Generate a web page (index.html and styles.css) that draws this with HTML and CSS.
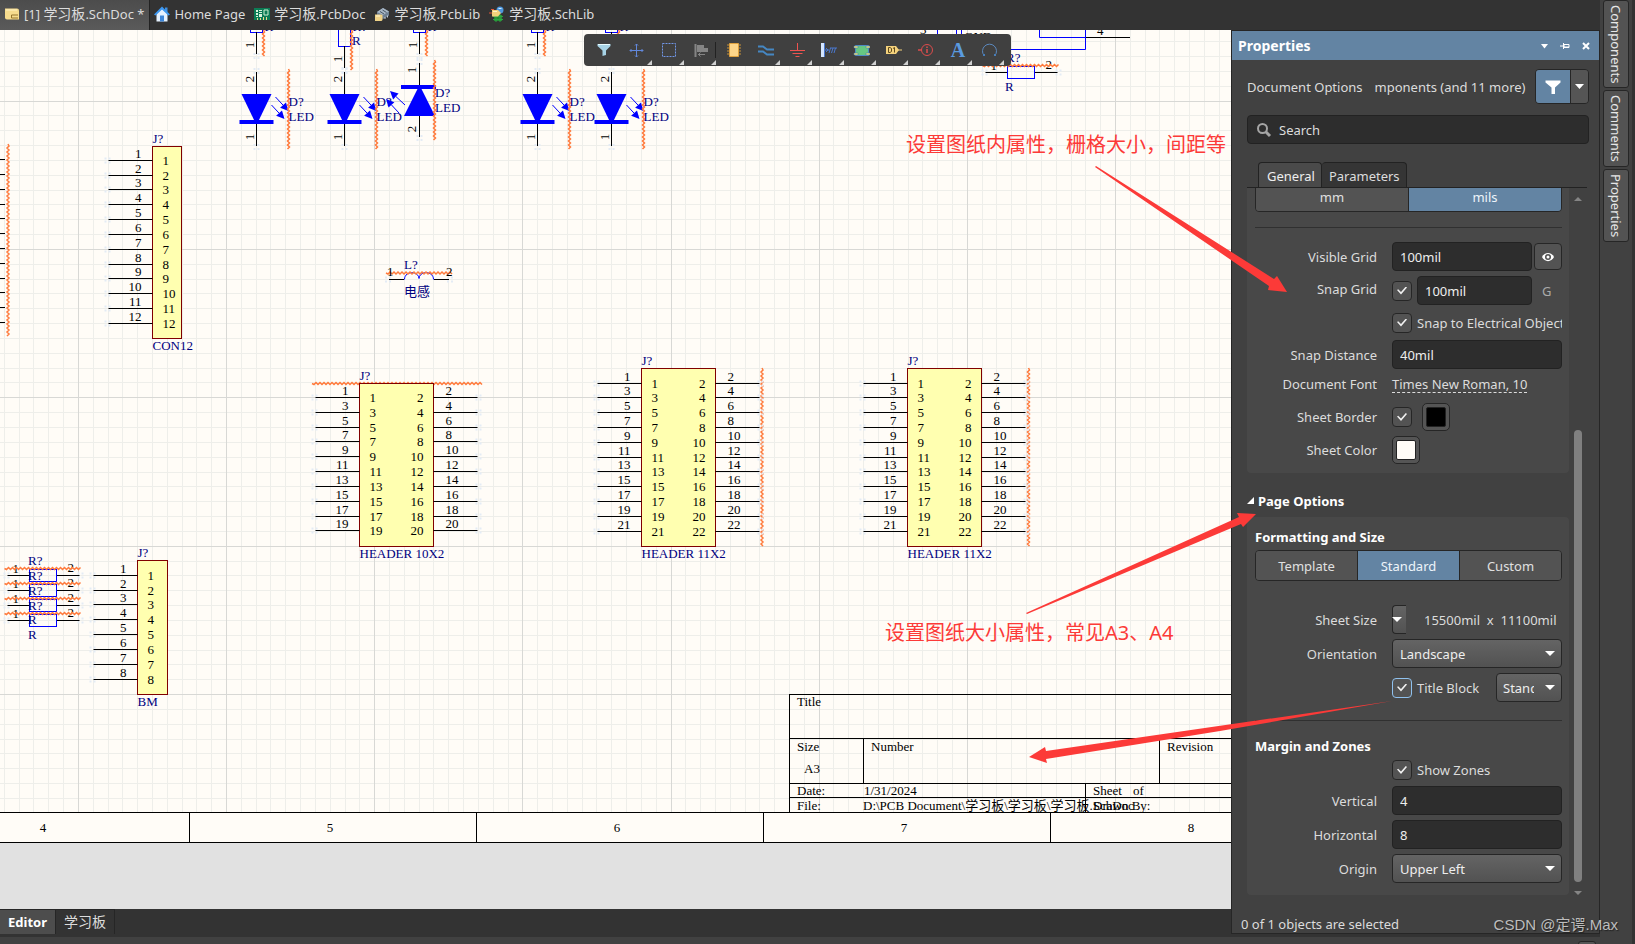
FILE: index.html
```html
<!DOCTYPE html>
<html lang="en">
<head>
<meta charset="utf-8">
<title>Schematic Editor</title>
<link rel="stylesheet" href="styles.css">
</head>
<body>
<div class="app">
  <div class="work">
    <nav class="doc-tabs" aria-label="Documents">
      <a class="doc-tab active" href="#">
        <svg width="16" height="16" viewBox="0 0 16 16"><path d="M1 2.500h12a2 2 0 0 1 2 2v9H3a2 2 0 0 1-2-2z" fill="#f7dc8e"/><path d="M2 3.500h11v1H2z" fill="#fff3c4"/><path d="M7.500 9H14M7.500 12H14M7.500 9v3" stroke="#94742c" fill="none"/></svg>
        <span>[1] <span class="cjk">学习板</span>.SchDoc *</span></a>
      <a class="doc-tab home" href="#">
        <svg width="16" height="16" viewBox="0 0 16 16"><path d="M11 1.500h2.500V6H11z" fill="#3e8ede"/><path d="M2.500 8 8 2.500 13.500 8v7.500h-11z" fill="#e4f1ff"/><path d="M0 8.500 8 .500l8 8-1.500 1L8 3.500 1.500 9.500z" fill="#3b97f2"/><path d="M6 9.500h4v6H6z" fill="#3d86d8"/></svg>
        <span>Home Page</span></a>
      <a class="doc-tab" href="#">
        <svg width="16" height="16" viewBox="0 0 16 16"><path d="M0 2h16v12H0z" fill="#0c7c55"/><path d="M2 4h2v2H2zM5 4h3v1H5zM5 6h3v1H5zM2 7h2v2H2zM2 10h2v1H2zM5 8h3v3H5z" fill="#d8f3de"/><path d="M10 4h4v5h-4z" fill="none" stroke="#c9efd0"/><path d="M3.500 12v2M6.500 12v2M9.500 11v3M12.500 11v3" stroke="#e7d98a"/></svg>
        <span><span class="cjk">学习板</span>.PcbDoc</span></a>
      <a class="doc-tab" href="#">
        <svg width="16" height="16" viewBox="0 0 16 16"><path d="M3 6 9 2l6 3.500v4L9 13 3 9z" fill="#6e7f92"/><path d="M3 6 9 2l6 3.500L9 9z" fill="#a8b7c6"/><path d="M6 5.500 10 8M8.500 4 12.500 6.500" stroke="#465463"/><path d="M1 8.500h6.500l1 1V14l-1 1H1z" fill="#efd287"/><path d="M2 10h4" stroke="#fff6d3"/><path d="M11 11v2M13.500 9.500v2" stroke="#c9d2da"/></svg>
        <span><span class="cjk">学习板</span>.PcbLib</span></a>
      <a class="doc-tab lib" href="#">
        <svg width="16" height="16" viewBox="0 0 16 16"><circle cx="11" cy="4" r="3.500" fill="#4d97dd"/><path d="M9.500 2.500h3" stroke="#cfe7ff"/><path d="M5 9h8v6H5z" fill="#248b35"/><path d="M4 10.500h10M4 13.500h10M7 8v8M11 8v8" stroke="#2fa443"/><path d="M3 4h6l3 3-3 3.500H3z" fill="#f2d27b"/><path d="M0 7h3M2 3.500h3" stroke="#e0573a"/><path d="M4 5.500h4" stroke="#fff2c6"/></svg>
        <span><span class="cjk">学习板</span>.SchLib</span></a>
    </nav>
    <div class="middle">
      <div class="editor">
        <div class="canvas">
          <svg id="sheet" class="sheet" role="img" aria-label="Schematic sheet"></svg>
          <div class="toolbar" role="toolbar" aria-label="Active bar">
            <button aria-label="Filter"><svg width="20" height="20" viewBox="0 0 20 20"><path d="M3.500 4h13v2L12 10.500V15l-3.500 1v-5.500L3.500 6z" fill="#a7d3e6"/><path d="M4 4.500h12" stroke="#e8fbff"/></svg></button>
            <button class="more" aria-label="Move"><svg width="20" height="20" viewBox="0 0 20 20"><path d="M10.500 4v13M4 10.500h13M9 5.500l1.500-1.500L12 5.500M9 15.500l1.500 1.500 1.500-1.500M5.500 9 4 10.500 5.500 12M15.500 9l1.500 1.500-1.500 1.500" fill="none" stroke="#6288dc"/></svg></button>
            <button class="more" aria-label="Select"><svg width="20" height="20" viewBox="0 0 20 20"><path d="M4.500 3.500h13v13h-13z" fill="none" stroke="#7197e8" stroke-dasharray="2 1"/></svg></button>
            <button class="more divider" aria-label="Align"><svg width="20" height="20" viewBox="0 0 20 20"><path d="M5.500 4v13" stroke="#858585" stroke-width="2"/><path d="M7 5h7v4H7zM7 8h11v4H7z" fill="#858585"/><path d="M8 14.500h7M10.500 12.500l-2 2 2 2" stroke="#858585" fill="none"/></svg></button>
            <button aria-label="Place part"><svg width="20" height="20" viewBox="0 0 20 20"><path d="M5 5h14M5 8h14M5 11h14M5 14h14" stroke="#c6923a"/><path d="M7.500 3.500h9v13h-9z" fill="#fdd589" stroke="#dfa13e"/></svg></button>
            <button class="more" aria-label="Place wire"><svg width="20" height="20" viewBox="0 0 20 20"><path d="M4 6.500h5l4 3h7M4 11.500h5l4 3h7" fill="none" stroke="#4587c3" stroke-width="2"/></svg></button>
            <button class="more" aria-label="Place ground"><svg width="20" height="20" viewBox="0 0 20 20"><path d="M11.500 3v8M4 10.500h15M6.500 13.500h10M9.500 16.500h4" fill="none" stroke="#ef5350"/></svg></button>
            <button class="more" aria-label="Place harness"><svg width="20" height="20" viewBox="0 0 20 20"><path d="M3 3h3v14H3z" fill="#d5e6ff"/><path d="M6.500 3v14M7 10h4M8 8l2 2-2 2M11 13l1.500-5M13.500 13 15 8M16 13l1.500-5M12 8h7" fill="none" stroke="#4a78cf"/></svg></button>
            <button class="more" aria-label="Place sheet symbol"><svg width="20" height="20" viewBox="0 0 20 20"><path d="M5.500 5.500h13v10h-13z" fill="#66c783" stroke="#4f8bc4"/><path d="M4 6h4v2H4zM16 6h4v2h-4zM4 13h4v2H4zM16 13h4v2h-4z" fill="#e9e07c" stroke="#4777ad" stroke-width=".5"/></svg></button>
            <button class="more" aria-label="Place port"><svg width="20" height="20" viewBox="0 0 20 20"><path d="M4 6h10l3 4-3 4H4z" fill="#f5d27c"/><path d="M16 10h4" stroke="#f5d27c"/><path d="M6.500 7.500v5M6.500 7.500h1.500l1.500 1v3l-1.500 1H6.500M11 8.500l1.500-1v5" fill="none" stroke="#5e4a1e"/></svg></button>
            <button class="more" aria-label="Place directive"><svg width="20" height="20" viewBox="0 0 20 20"><circle cx="13" cy="10" r="5.500" fill="none" stroke="#dd4c4c"/><path d="M4 10h4M13 9v4M13 6.500v1.500" stroke="#dd4c4c" stroke-width="1.500"/></svg></button>
            <button class="more letter" aria-label="Place text">A</button>
            <button class="more" aria-label="Place arc"><svg width="20" height="20" viewBox="0 0 20 20"><path d="M6 15.500a7 7 0 1 1 11 0" fill="none" stroke="#5b88bd"/><path d="M5 14h2v2H5zM16 14h2v2h-2z" fill="#477db8"/></svg></button>
          </div>
        </div>
        <nav class="sheet-tabs" aria-label="Sheets">
          <a class="sheet-tab active" href="#">Editor</a>
          <a class="sheet-tab cjk" href="#">学习板</a>
        </nav>
      </div>

      <aside class="panel">
        <header class="panel-head">
          <h1>Properties</h1>
          <button aria-label="Menu"><svg width="12" height="12" viewBox="0 0 12 12"><path d="M3 4h7L6.500 8.500z" fill="#fff"/></svg></button>
          <button aria-label="Pin"><svg width="12" height="12" viewBox="0 0 12 12"><path d="M1 6h4M4.500 3v6M5 4.500h5v3H5z" fill="none" stroke="#fff"/><path d="M5 7h5" stroke="#fff"/></svg></button>
          <button aria-label="Close"><svg width="12" height="12" viewBox="0 0 12 12"><path d="M3 3l6 6M9 3l-6 6" stroke="#fff" stroke-width="2"/></svg></button>
        </header>
        <div class="scope">
          <span>Document Options</span>
          <span class="scope-more">mponents (and 11 more)</span>
          <div class="split">
            <button class="split-main" aria-label="Filter objects"><svg width="16" height="16" viewBox="0 0 16 16"><path d="M.500 1.500h15v2L10 8.500V15H6.500V8.500L.500 3.500z" fill="#fff"/></svg></button>
            <button class="split-drop" aria-label="Filter options"><i class="caret"></i></button>
          </div>
        </div>
        <label class="search">
          <svg width="16" height="16" viewBox="0 0 16 16"><circle cx="6.500" cy="6.500" r="4.500" fill="none" stroke="#a5a5a5" stroke-width="2"/><path d="M10 10l4 4" stroke="#a5a5a5" stroke-width="3"/></svg>
          <input type="text" placeholder="Search" aria-label="Search">
        </label>
        <div class="prop-tabs" role="tablist">
          <button class="prop-tab active" role="tab" aria-selected="true">General</button>
          <button class="prop-tab" role="tab" aria-selected="false">Parameters</button>
        </div>
        <div class="scroll-area">
          <div class="scroll">
            <section class="card general">
              <div class="segments units"><button>mm</button><button class="on">mils</button></div>
              <hr class="rule">
              <div class="rows">
                <div class="row"><label for="vgrid">Visible Grid</label><div class="field tight"><input class="text" id="vgrid" type="text" value="100mil"><button class="eye" aria-label="Toggle grid"><svg width="14" height="12" viewBox="0 0 14 12"><path d="M1 6c2.500-5.500 9.500-5.500 12 0-2.500 5.500-9.500 5.500-12 0z" fill="#fff"/><circle cx="7" cy="6" r="3" fill="#505050"/><circle cx="7" cy="6" r="1.500" fill="#fff"/></svg></button></div></div>
                <div class="row"><label class="raised" for="sgrid">Snap Grid</label><div class="field"><input class="check" type="checkbox" checked aria-label="Snap Grid on"><input class="text" id="sgrid" type="text" value="100mil"><span class="hotkey">G</span></div></div>
                <div class="row short"><span></span><div class="field clip"><input class="check" id="elec" type="checkbox" checked><label for="elec">Snap to Electrical Object</label></div></div>
                <div class="row"><label for="sdist">Snap Distance</label><div class="field"><input class="text" id="sdist" type="text" value="40mil"></div></div>
                <div class="row font"><span>Document Font</span><div class="field"><a class="font-link" href="#">Times New Roman, 10</a></div></div>
                <div class="row color"><label for="border">Sheet Border</label><div class="field wide"><input class="check" id="border" type="checkbox" checked><input class="swatch" type="color" value="#000000" aria-label="Border color"></div></div>
                <div class="row color"><label for="scolor">Sheet Color</label><div class="field"><input class="swatch" id="scolor" type="color" value="#fffcf7"></div></div>
              </div>
            </section>
            <h2 class="group"><svg width="8" height="8" viewBox="0 0 8 8"><path d="M7 0v7H0z" fill="#fff"/></svg>Page Options</h2>
            <section class="card page">
              <h3>Formatting and Size</h3>
              <div class="segments"><button>Template</button><button class="on">Standard</button><button>Custom</button></div>
              <div class="rows size-rows">
                <div class="row"><label for="size">Sheet Size</label><div class="field"><span class="select mini"><select id="size"><option></option></select></span><span class="dims">15500mil&nbsp; x&nbsp; 11100mil</span></div></div>
                <div class="row"><label for="orient">Orientation</label><div class="field"><span class="select"><select id="orient"><option>Landscape</option></select></span></div></div>
                <div class="row"><span></span><div class="field"><input class="check focus" id="tblock" type="checkbox" checked><label for="tblock">Title Block</label><span class="select small"><select aria-label="Title block style"><option>Standard</option></select></span></div></div>
              </div>
              <hr class="rule lower">
              <h3>Margin and Zones</h3>
              <div class="rows">
                <div class="row zones"><span></span><div class="field"><input class="check" id="zones" type="checkbox" checked><label for="zones">Show Zones</label></div></div>
                <div class="row"><label for="vert">Vertical</label><div class="field"><input class="text" id="vert" type="text" value="4"></div></div>
                <div class="row"><label for="horz">Horizontal</label><div class="field"><input class="text" id="horz" type="text" value="8"></div></div>
                <div class="row"><label for="origin">Origin</label><div class="field"><span class="select"><select id="origin"><option>Upper Left</option></select></span></div></div>
              </div>
            </section>
          </div>
          <div class="bar" aria-hidden="true"><i class="up"></i><div class="track"><div class="thumb"></div></div><i class="down"></i></div>
        </div>
        <footer class="panel-foot">0 of 1 objects are selected</footer>
      </aside>
    </div>
    <div class="status"><button aria-label="Panels"></button></div>
  </div>
  <nav class="side" aria-label="Panels">
    <button>Components</button>
    <button>Comments</button>
    <button>Properties</button>
  </nav>
  <svg class="notes" aria-hidden="true">
    <g fill="#fc3a38">
      <path d="M1096 166 1095 167 1269 286 1268 290 1287 292 1277 276 1274 279z"/>
      <path d="M1026 613 1027 614 1241 524 1243 527 1256 514 1237 513 1239 517z"/>
      <path d="M1392 701 1046 751 1045 747 1029 757 1047 763 1046 759 1220 731z"/>
      <text x="906" y="152">设置图纸内属性，栅格大小，间距等</text>
      <text x="885" y="640">设置图纸大小属性，常见A3、A4</text>
    </g>
  </svg>
  <div class="watermark">CSDN @定谔.Max</div>
</div>
<script src="script.js"></script>
</body>
</html>
```
FILE: styles.css
```css
* { box-sizing: border-box; }

body {
  margin: 0;
  background: #333;
  color: #dcdcdc;
  font: 13px/18px "Noto Sans", "Noto Sans CJK SC", sans-serif;
}

button, input, select { font: inherit; color: inherit; margin: 0; }
button { padding: 0; border: 0; background: none; }
a { color: inherit; text-decoration: none; }
svg { display: block; flex: none; }
h1, h2, h3 { margin: 0; font-weight: 700; color: #fff; }
.cjk { font-size: 14px; }

.app { position: relative; display: flex; height: 100vh; overflow: hidden; }
.work { flex: 1; min-width: 0; display: flex; flex-direction: column; }
.middle { flex: 1; min-height: 0; display: flex; }

/* document tabs */
.doc-tabs { display: flex; height: 30px; background: #333; }
.doc-tab { display: flex; align-items: center; gap: 4px; height: 30px; padding: 0 0 2px 9px; white-space: nowrap; }
.doc-tab.active { padding: 0 5px 2px 4px; background: linear-gradient(#4c4c4c, #5a5a5a); border-right: 1px solid #222; }
.doc-tab.home { padding-left: 4px; }

/* canvas */
.editor { flex: 1; min-width: 0; display: flex; flex-direction: column; }
.canvas { position: relative; flex: 1; min-height: 0; overflow: hidden; background: #e1e1e1; }
.sheet { width: 100%; height: 100%; font: 13px "Liberation Serif", "Noto Sans CJK SC", serif; }

.toolbar {
  position: absolute;
  top: 4px;
  left: 584px;
  display: flex;
  padding: 0 7px 0 4px;
  background: #404040;
  border-radius: 4px;
}
.toolbar button { position: relative; width: 32px; height: 32px; display: flex; align-items: center; justify-content: center; }
.toolbar .more::after {
  content: "";
  position: absolute;
  right: 0;
  bottom: 1px;
  width: 5px;
  height: 5px;
  background: #d0d0d0;
  clip-path: polygon(100% 0, 100% 100%, 0 100%);
}
.toolbar .divider::before { content: ""; position: absolute; right: 0; top: 8px; width: 1px; height: 16px; background: #222; }
.toolbar .letter { padding-left: 4px; font: 700 20px "Liberation Serif", serif; color: #5a9be0; }

.sheet-tabs { display: flex; height: 28px; padding-bottom: 3px; background: #333; }
.sheet-tab { display: flex; align-items: center; padding: 0 8px; border: 1px solid #262626; border-width: 1px 1px 0 0; }
.sheet-tab.active { font-weight: 700; color: #fff; background: #4d4d4d; }

.status { height: 7px; display: flex; justify-content: flex-end; align-items: flex-start; padding: 4px 4px 0; overflow: hidden; background: #414141; }
.status button { width: 18px; height: 20px; border: 1px solid #262626; border-radius: 3px; background: #555; }

/* side tabs */
.side { flex: none; width: 35px; display: flex; flex-direction: column; align-items: flex-start; gap: 2px; padding-left: 3px; background: #414141; border-right: 3px solid #333; }
.side button { writing-mode: vertical-rl; width: 26px; padding: 4px 0; background: #535353; border: 1px solid #262626; border-radius: 3px; color: #e6e6e6; line-height: 24px; }

/* properties panel */
.panel { flex: none; width: 369px; display: flex; flex-direction: column; margin-bottom: 3px; background: #414141; border: 1px solid #262626; }
.panel-head { display: flex; align-items: center; gap: 9px; height: 29px; padding: 0 7px 0 6px; background: #6384a3; }
.panel-head h1 { flex: 1; font-size: 14px; }

.scope { display: flex; align-items: center; margin: 9px 10px 11px 15px; white-space: nowrap; }
.scope-more { margin-left: 12px; flex: 1; }
.split { display: flex; height: 35px; border: 1px solid #262626; border-radius: 4px; overflow: hidden; }
.split-main { width: 35px; display: flex; align-items: center; justify-content: center; background: #6384a3; border-right: 1px solid #262626; }
.split-drop { width: 17px; display: flex; align-items: center; justify-content: center; background: #555; }
.caret { width: 9px; height: 5px; background: #fff; clip-path: polygon(0 0, 100% 0, 50% 100%); }

.search { display: flex; align-items: center; gap: 7px; height: 29px; margin: 0 10px 0 15px; padding: 0 9px 0 8px; background: #2d2d2d; border: 1px solid #222; border-radius: 4px; }
.search input { flex: 1; min-width: 0; padding: 0; border: 0; background: none; outline: 0; }
.search input::placeholder { color: #dcdcdc; opacity: 1; }

.prop-tabs { display: flex; margin: 18px 12px 0 15px; padding-left: 11px; border-bottom: 1px solid #222; }
.prop-tab { height: 25px; padding: 2px 6px 0 7px; border: 1px solid #222; border-width: 1px 1px 0 0; border-radius: 4px 4px 0 0; background: #353535; }
.prop-tab.active { padding-left: 8px; border-left-width: 1px; background: #4a4a4a; color: #eee; }

.scroll-area { flex: 1; min-height: 0; display: flex; margin: 0 12px 0 15px; }
.scroll { flex: 1; min-width: 0; overflow: hidden; }
.card { padding: 0 7px 0 8px; background: #484848; border-radius: 4px; }
.general { padding-bottom: 9px; border-radius: 0 0 4px 4px; display: flow-root; }
.page { padding-top: 8px; padding-bottom: 12px; }
.group { display: flex; align-items: center; gap: 3px; height: 44px; padding-top: 12px; font-size: 13px; }
.card h3 { height: 25px; font-size: 13px; line-height: 25px; }

.segments { display: flex; height: 31px; border: 1px solid #262626; border-radius: 4px; overflow: hidden; }
.segments.units { margin-top: -7px; }
.segments button { flex: 1; background: #535353; color: #e0e0e0; }
.segments button + button { border-left: 1px solid #262626; }
.segments .on { background: #6384a3; color: #eef4fa; }

.rule { margin: 15px 0 14px; border: 0; border-top: 1px solid #303030; }
.rule.lower { margin: 18px 0 13px; }

.rows { display: flex; flex-direction: column; gap: 5px; }
.size-rows { margin-top: 24px; }
.row { display: grid; grid-template-columns: 122px minmax(0, 1fr); column-gap: 15px; align-items: center; height: 29px; white-space: nowrap; }
.row > :first-child { text-align: right; }
.row .raised { padding-bottom: 4px; }
.row.short { height: 25px; }
.row.font { height: 24px; padding-bottom: 4px; }
.row.color { height: 28px; }
.row.zones { height: 22px; }
.field { display: flex; align-items: center; gap: 5px; min-width: 0; }
.field.tight { gap: 2px; }
.field.wide { gap: 10px; }
.field.clip { overflow: hidden; }

.text { flex: 1; min-width: 0; height: 29px; padding: 0 7px; background: #2d2d2d; border: 1px solid #222; border-radius: 4px; color: #eee; }
.hotkey { width: 25px; padding-left: 5px; color: #aaa; }
.eye { width: 28px; height: 27px; display: flex; align-items: center; justify-content: center; background: #535353; border: 1px solid #262626; border-radius: 4px; }

.check { appearance: none; flex: none; width: 20px; height: 20px; display: grid; place-items: center; background: #535353; border: 1px solid #262626; border-radius: 4px; }
.check:checked::after { content: ""; width: 10px; height: 8px; background: #f0f0f0; clip-path: polygon(0 45%, 12% 33%, 40% 70%, 88% 0, 100% 12%, 40% 100%); }
.check.focus { border-color: #8fc1ee; }

.font-link { border-bottom: 1px dashed #dcdcdc; line-height: 16px; }

.swatch { appearance: none; width: 28px; height: 28px; padding: 3px; background: #555; border: 1px solid #262626; border-radius: 5px; }
.swatch::-webkit-color-swatch-wrapper { padding: 0; }
.swatch::-webkit-color-swatch { border: 1px solid #222; border-radius: 2px; }

.select { position: relative; flex: 1; min-width: 0; height: 29px; }
.select select { appearance: none; width: 100%; height: 29px; padding: 0 24px 0 7px; background: linear-gradient(#646464, #525252); border: 1px solid #262626; border-radius: 4px; color: #eee; }
.select::after { content: ""; position: absolute; right: 7px; top: 12px; width: 10px; height: 5px; background: #fff; clip-path: polygon(0 0, 100% 0, 50% 100%); pointer-events: none; }
.select.small { flex: none; width: 66px; margin-left: auto; }
.select.small select { padding: 0 27px 0 6px; }
.select.mini { flex: none; width: 14px; }
.select.mini select { padding: 0; border-right: 0; border-radius: 4px 0 0 4px; }
.select.mini::after { right: 4px; }
.dims { margin-left: 13px; }

.bar { flex: none; width: 18px; display: flex; flex-direction: column; align-items: center; padding: 9px 0 6px; }
.up, .down { width: 8px; height: 4px; background: #858585; }
.up { clip-path: polygon(50% 0, 100% 100%, 0 100%); }
.down { clip-path: polygon(0 0, 100% 0, 50% 100%); }
.track { flex: 1; width: 8px; margin: 7px 0 9px; display: flex; align-items: flex-end; }
.thumb { width: 8px; height: 67%; background: #808080; border-radius: 4px; }

.panel-foot { height: 32px; padding: 14px 0 0 9px; }

/* annotations over the whole window */
.notes { position: absolute; inset: 0; width: 100%; height: 100%; pointer-events: none; font: 20px "Noto Sans", "Noto Sans CJK SC", sans-serif; }
.watermark { position: absolute; right: 17px; bottom: 9px; font: 15px/20px "Liberation Sans", "Noto Sans CJK SC", sans-serif; color: #bdbdbd; text-shadow: 1px 1px 1px #222; }
```
FILE: script.js
```js
const out = [];
const STEP = 14.82;
const snap = v => Math.floor(v) + 0.5;

function line(x1, y1, x2, y2, color = '#000', w = 1) {
  out.push(`<path d="M${x1} ${y1}L${x2} ${y2}" stroke="${color}" stroke-width="${w}" fill="none"/>`);
}
function rect(x, y, w, h, fill, stroke) {
  out.push(`<rect x="${x}" y="${y}" width="${w}" height="${h}" fill="${fill}" stroke="${stroke}"/>`);
}
function text(x, y, s, color = '#000', anchor = 'start') {
  out.push(`<text x="${x}" y="${y}" fill="${color}" text-anchor="${anchor}">${s}</text>`);
}
function upright(x, y, s) {
  out.push(`<text transform="translate(${x} ${y}) rotate(-90)" text-anchor="middle">${s}</text>`);
}
const NAVY = '#000080', BLUE = '#0000ff';

// Warning squiggle, horizontal or vertical
function squiggle(x1, y1, x2, y2) {
  const horizontal = y1 === y2;
  const length = horizontal ? x2 - x1 : y2 - y1;
  let d = `M${x1} ${y1}`;
  for (let i = 2, s = 1; i <= length; i += 2, s = -s) {
    d += horizontal ? `L${x1 + i} ${y1 + s}` : `L${x1 + s} ${y1 + i}`;
  }
  out.push(`<path d="${d}" fill="none" stroke="#ff7a3c" stroke-width="1.5"/>`);
}
// Hot end of a pin
function dots(x, y) {
  out.push(`<path d="M${x - 3} ${y - 3}h2v2h-2zM${x + 1} ${y - 3}h2v2h-2zM${x - 3} ${y + 1}h2v2h-2zM${x + 1} ${y + 1}h2v2h-2z" fill="#e4ebf5"/>`);
}

// Sheet and grid
out.push('<rect x="0" y="0" width="100%" height="842" fill="#fffcf7"/>');
for (let i = -5; i < 110; i++) {
  if (i % 10) line(snap(78.4 + 14.815 * i), 0, snap(78.4 + 14.815 * i), 812, '#eeeeea');
}
for (let i = -15; i < 38; i++) {
  if (i % 10) line(0, snap(249.4 + 14.84 * i), 2000, snap(249.4 + 14.84 * i), '#eeeeea');
}
for (let i = 0; i < 12; i++) line(snap(78.4 + 148.15 * i), 0, snap(78.4 + 148.15 * i), 812, '#d8d8d5');
for (let i = -1; i < 4; i++) line(0, snap(249.4 + 148.4 * i), 2000, snap(249.4 + 148.4 * i), '#d8d8d5');

// Border zones
line(0, 812.5, 2000, 812.5);
line(0, 842.5, 2000, 842.5);
for (let i = 0; i < 4; i++) line(snap(189.4 + 287 * i), 812, snap(189.4 + 287 * i), 842);
for (let i = 0; i < 5; i++) text(43 + 287 * i, 832, 4 + i, '#000', 'middle');

// Connectors
function connector(x, y, w, h, firstPin, count, name, dual) {
  const pins = [];
  for (let i = 0; i < count; i++) pins.push(snap(firstPin + STEP * i));
  pins.forEach(py => { dots(x - 45, py); if (dual) dots(x + w + 45, py); });
  rect(x, y, w, h, '#ffffb0', '#800000');
  pins.forEach((py, i) => {
    const left = dual ? 2 * i + 1 : i + 1;
    line(x - 44, py, x, py);
    text(x - 11, py - 3, left, '#000', 'end');
    text(x + 10, py + 4, left);
    if (dual) {
      line(x + w, py, x + w + 44, py);
      text(x + w + 12, py - 3, left + 1);
      text(x + w - 10, py + 4, left + 1, '#000', 'end');
    }
  });
  text(x, y - 4, 'J?', NAVY);
  text(x, y + h + 11, name, NAVY);
}
squiggle(312, 383.5, 482, 383.5);
squiggle(762, 368, 762, 546);
squiggle(1028.5, 368, 1028.5, 546);
squiggle(8, 144, 8, 337);
connector(152.5, 146.5, 29, 192, 160.3, 12, 'CON12');
connector(137.5, 560.5, 30, 134, 575.3, 8, 'BM');
connector(359.5, 383.5, 74, 163, 397.5, 10, 'HEADER 10X2', true);
connector(641.5, 368.5, 74, 178, 383, 11, 'HEADER 11X2', true);
connector(907.5, 368.5, 74, 178, 383, 11, 'HEADER 11X2', true);
for (let i = 0; i < 12; i++) line(0, snap(159.6 + STEP * i), 5, snap(159.6 + STEP * i));

// Horizontal resistors
function resistor(x, y) {
  dots(x - 23, y); dots(x + 51, y);
  line(x - 22, y, x, y);
  line(x + 27, y, x + 50, y);
  rect(x, y - 6, 27, 12, 'none', BLUE);
  text(x - 17, y - 3, 1);
  text(x + 38, y - 4, 2);
  squiggle(x - 25, y - 7, x + 52, y - 7);
}
[575.5, 590.5, 605.5, 620.5].forEach(y => {
  resistor(29.5, y);
  text(28, y - 11, 'R?', NAVY);
});
text(28, 624, 'R', NAVY);
text(28, 639, 'R', NAVY);
resistor(1007.5, 72.5);
text(1006, 62, 'R?', NAVY);
text(1005, 91, 'R', NAVY);

// Vertical resistors entering from above
function topResistor(x, end) {
  rect(x - 6, 10, 12, end - 10 + 0.5, 'none', BLUE);
  dots(x, end + 24);
  line(x, end, x, end + 22);
  upright(x - 3, end + 13, 1);
  squiggle(x + 7, 30, x + 7, end + 25);
  text(x + 8, 31, end > 40 ? 'R?' : 'R', NAVY);
}
[256.5, 419.5, 537.5, 611.5].forEach(x => topResistor(x, 32));
topResistor(344.5, 46);
text(352, 45, 'R', NAVY);

// LEDs
function arrow(x1, y1, x2, y2) {
  const a = Math.atan2(y2 - y1, x2 - x1), c = Math.cos(a), s = Math.sin(a);
  const bx = x2 - 8 * c, by = y2 - 8 * s;
  line(x1, y1, bx, by, BLUE);
  out.push(`<path d="M${x2} ${y2}L${bx - 4 * s} ${by + 4 * c}L${bx + 4 * s} ${by - 4 * c}z" fill="${BLUE}"/>`);
}
function led(x) {
  dots(x, 71); dots(x, 147);
  line(x, 72, x, 146);
  out.push(`<path d="M${x - 15} 94h30L${x + 1} 123h-2z" fill="${BLUE}"/>`);
  line(x - 17, 122, x + 17, 122, BLUE, 4);
  arrow(x + 19, 97, x + 32, 111);
  arrow(x + 15, 105, x + 28, 119);
  upright(x - 3, 79, 2);
  upright(x - 3, 137, 1);
  squiggle(x + 32, 69, x + 32, 149);
  text(x + 32, 106, 'D?', NAVY);
  text(x + 32, 121, 'LED', NAVY);
}
[256.5, 344.5, 537.5, 611.5].forEach(led);
dots(419.5, 62); dots(419.5, 138);
line(419.5, 63, 419.5, 137);
out.push(`<path d="M404 116h31L420.500 87h-2z" fill="${BLUE}"/>`);
line(401, 87, 436, 87, BLUE, 4);
arrow(405, 105, 390, 91);
arrow(399, 113, 386, 99);
upright(416, 70, 1);
upright(416, 129, 2);
squiggle(434.5, 60, 434.5, 141);
text(435, 97, 'D?', NAVY);
text(435, 112, 'LED', NAVY);

// Part cut off at the top right
line(937.5, 0, 937.5, 40, BLUE);
line(956.5, 0, 956.5, 40, BLUE);
line(961.5, 0, 961.5, 40, BLUE);
text(920, 34, 3);
text(964, 41, 'GND');
out.push(`<path d="M1039.500 0v37.500h46M1085.500 0v49.500H1000" fill="none" stroke="${BLUE}"/>`);
line(1086, 37.5, 1130, 37.5);
text(1097, 35, 4);

// Inductor
dots(388, 279.5); dots(450, 279.5);
line(389, 279.5, 404, 279.5);
line(434, 279.5, 449, 279.5);
out.push(`<path d="M404.500 279.500c0-9 14-9 14.500-1c.500-8 14.500-8 14.500 1" fill="none" stroke="${BLUE}"/>`);
squiggle(386, 273, 452, 273);
text(387, 276, 1);
text(446, 276, 2);
text(404, 269, 'L?', NAVY);
text(404, 296, '电感', NAVY);

// Title block
line(789.5, 694, 789.5, 812);
line(789, 694.5, 2000, 694.5);
line(789, 738.5, 2000, 738.5);
line(789, 783.5, 2000, 783.5);
line(789, 797.5, 2000, 797.5);
line(863.5, 738, 863.5, 783);
line(1159.5, 738, 1159.5, 783);
line(1085.5, 783, 1085.5, 812);
text(797, 706, 'Title');
text(797, 751, 'Size');
text(804, 773, 'A3');
text(871, 751, 'Number');
text(1167, 751, 'Revision');
text(797, 795, 'Date:');
text(864, 795, '1/31/2024');
text(1093, 795, 'Sheet');
text(1133, 795, 'of');
text(797, 810, 'File:');
text(863, 810, 'D:\\PCB Document\\学习板\\学习板\\学习板.SchDoc');
text(1093, 810, 'Drawn By:');

document.getElementById('sheet').innerHTML = `<g transform="translate(0 -30)">${out.join('')}</g>`;
```
